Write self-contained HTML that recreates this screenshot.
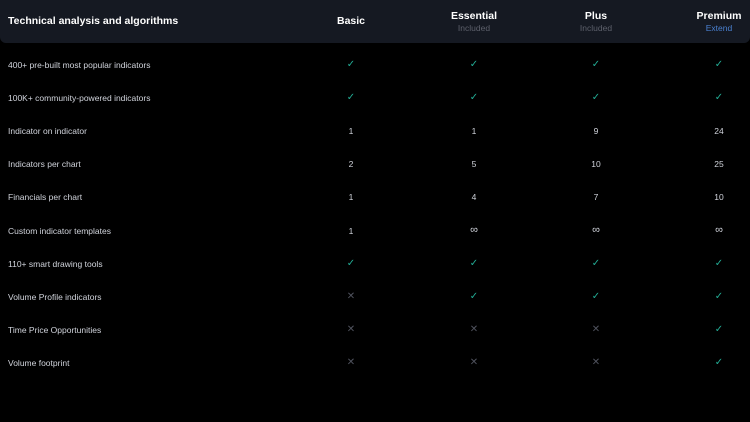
<!DOCTYPE html>
<html><head><style>
body{margin:0;width:750px;height:422px;background:#000;overflow:hidden;font-family:"Liberation Sans",sans-serif;color:#d1d4dc;position:relative}
.hd{position:absolute;left:0;top:0;width:750px;height:43px;background:#151922;border-radius:0 0 6px 6px}
.t{position:absolute;white-space:nowrap}
.h{font-weight:bold;font-size:10.5px;color:#fff}
.s{font-size:8.5px;color:#5d606b}
.c{transform:translateX(-50%);text-align:center}
.r{font-size:8.5px;color:#d1d4dc}
.ck{color:#22ab94;font-size:10px}
.x{color:#50535e;font-size:10px}
</style></head><body>
<div class="hd"></div>
<div class="t h" style="left:8px;top:15px">Technical analysis and algorithms</div>
<div class="t h c" style="left:351px;top:15px">Basic</div>
<div class="t h c" style="left:474px;top:10px">Essential</div>
<div class="t s c" style="left:474px;top:23px">Included</div>
<div class="t h c" style="left:596px;top:10px">Plus</div>
<div class="t s c" style="left:596px;top:23px">Included</div>
<div class="t h c" style="left:719px;top:10px">Premium</div>
<div class="t s c" style="left:719px;top:23px;color:#4a80d0">Extend</div>
<div id="rows"></div>
<script>
var rows=[["400+ pre-built most popular indicators","v","v","v","v"],
["100K+ community-powered indicators","v","v","v","v"],
["Indicator on indicator","1","1","9","24"],
["Indicators per chart","2","5","10","25"],
["Financials per chart","1","4","7","10"],
["Custom indicator templates","1","∞","∞","∞"],
["110+ smart drawing tools","v","v","v","v"],
["Volume Profile indicators","x","v","v","v"],
["Time Price Opportunities","x","x","x","v"],
["Volume footprint","x","x","x","v"]];
var xs=[351,474,596,719],h="";
rows.forEach(function(r,i){var y=65.5+i*33.2;
h+='<div class="t r" style="left:8px;top:'+(y-6)+'px">'+r[0]+'</div>';
for(var j=1;j<5;j++){var v=r[j],cls="r",tx=v,dy=-6;
if(v=="v"){cls="ck";tx="✓";dy=-7;}else if(v=="x"){cls="x";tx="✕";dy=-7;}else if(v=="∞"){cls="r";tx='<span style="font-size:11px">∞</span>';dy=-8;}
h+='<div class="t c '+cls+'" style="left:'+xs[j-1]+'px;top:'+(y+dy)+'px">'+tx+'</div>';}
});
document.getElementById("rows").innerHTML=h;
</script>
</body></html>
